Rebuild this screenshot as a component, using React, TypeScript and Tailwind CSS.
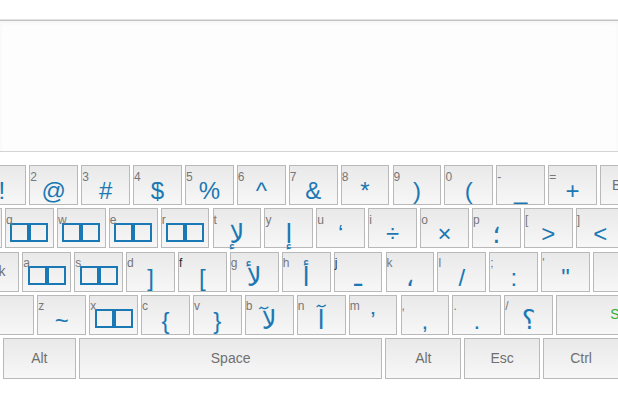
import React from "react";

type KeyDef = {
    label?: string;
    main?: string;
    tofu?: boolean;
    dark?: boolean;
    ar?: boolean;
};

const BLUE = "text-[#1a78b4]";

const row1: KeyDef[] = [
    { label: "1", main: "!" },
    { label: "2", main: "@" },
    { label: "3", main: "#" },
    { label: "4", main: "$" },
    { label: "5", main: "%" },
    { label: "6", main: "^" },
    { label: "7", main: "&" },
    { label: "8", main: "*" },
    { label: "9", main: ")" },
    { label: "0", main: "(" },
    { label: "-", main: "_" },
    { label: "=", main: "+" },
];

const row2: KeyDef[] = [
    { label: "q", tofu: true },
    { label: "w", tofu: true },
    { label: "e", tofu: true },
    { label: "r", tofu: true },
    { label: "t", main: "لإ", ar: true },
    { label: "y", main: "إ", ar: true },
    { label: "u", main: "‘" },
    { label: "i", main: "÷" },
    { label: "o", main: "×" },
    { label: "p", main: "؛", ar: true },
    { label: "[", main: ">" },
    { label: "]", main: "<" },
];

const row3: KeyDef[] = [
    { label: "a", tofu: true },
    { label: "s", tofu: true },
    { label: "d", main: "]" },
    { label: "f", main: "[", dark: true },
    { label: "g", main: "لأ", ar: true },
    { label: "h", main: "أ", ar: true },
    { label: "j", main: "ـ", dark: true, ar: true },
    { label: "k", main: "،", ar: true },
    { label: "l", main: "/" },
    { label: ";", main: ":" },
    { label: "'", main: "\"" },
];

const row4: KeyDef[] = [
    { label: "z", main: "~" },
    { label: "x", tofu: true },
    { label: "c", main: "{" },
    { label: "v", main: "}" },
    { label: "b", main: "لآ", ar: true },
    { label: "n", main: "آ", ar: true },
    { label: "m", main: "’" },
    { label: ",", main: "," },
    { label: ".", main: "." },
    { label: "/", main: "؟", ar: true },
];

const keyBase =
    "relative shrink-0 border-[1.5px] border-[#b9b9b9] bg-gradient-to-b from-[#e9e9e9] to-[#f7f7f7]";

const CharKey = ({ k }: { k: KeyDef }) => (
    <div className={`${keyBase} h-[40px] w-[48.8px] flex justify-center`}>
        <span
            className={`absolute left-0 top-[4.5px] text-[12px] leading-none ${
                k.dark ? "text-[#2a2a2a]" : "text-[#777]"
            }`}
        >
            {k.label}
        </span>
        {k.tofu ? (
            <div className="mt-[13.5px] flex">
                <div className="w-[19px] h-[19px] border-2 border-[#1a78b4]" />
                <div className="w-[19px] h-[19px] border-2 border-[#1a78b4]" />
            </div>
        ) : (
            <span
                className={`leading-[24px] ${BLUE} ${
                    k.ar ? "mt-[12.5px] text-[26px]" : "mt-[13.2px] text-[24px]"
                }`}
            >
                {k.main}
            </span>
        )}
    </div>
);

const ActionKey = ({
    text,
    w,
    h = "h-[40px]",
    green,
}: {
    text: string;
    w: string;
    h?: string;
    green?: boolean;
}) => (
    <div
        className={`${keyBase} ${w} ${h} flex items-center justify-center text-[14px] ${
            green ? "text-[#33ad33]" : "text-[#707070]"
        }`}
    >
        {text}
    </div>
);

export default function App() {
    return (
        <div className="w-[618px] h-[394px] bg-white overflow-hidden font-['Liberation_Sans','DejaVu_Sans',sans-serif]">
            {/* text area */}
            <div className="mt-[19px] h-[133px] border-t border-t-[#e2e2e2] border-b border-b-[#d4d4d4] shadow-[inset_0_1px_0_#c2c2c2,inset_0_3px_4px_rgba(0,0,0,0.04)] bg-[#fdfdfd]" />

            {/* keyboard */}
            <div className="pt-[13px] bg-white flex flex-col gap-[3.25px]">
                <div className="flex gap-[3.1px] ml-[-22.6px]">
                    {row1.map((k) => (
                        <CharKey key={k.label} k={k} />
                    ))}
                    <ActionKey text="Bksp" w="w-[55px]" />
                </div>
                <div className="flex gap-[3.1px] ml-[-58.1px]">
                    <ActionKey text="Tab" w="w-[60px]" />
                    {row2.map((k) => (
                        <CharKey key={k.label} k={k} />
                    ))}
                </div>
                <div className="flex gap-[3.1px] ml-[-37.8px]">
                    <ActionKey text="Lock" w="w-[57px]" />
                    {row3.map((k) => (
                        <CharKey key={k.label} k={k} />
                    ))}
                    <ActionKey text="Enter" w="w-[100px]" />
                </div>
                <div className="flex gap-[3.1px] ml-[-75.8px]">
                    <ActionKey text="Shift" w="w-[110px]" />
                    {row4.map((k) => (
                        <CharKey key={k.label} k={k} />
                    ))}
                    <ActionKey text="Shift" w="w-[136px]" green />
                </div>
                <div className="flex gap-[3.1px] ml-[2.8px]">
                    <ActionKey text="Alt" w="w-[73px]" h="h-[41px]" />
                    <ActionKey text="Space" w="w-[303.5px]" h="h-[41px]" />
                    <ActionKey text="Alt" w="w-[75.7px]" h="h-[41px]" />
                    <ActionKey text="Esc" w="w-[75.7px]" h="h-[41px]" />
                    <ActionKey text="Ctrl" w="w-[76px]" h="h-[41px]" />
                </div>
            </div>
        </div>
    );
}
